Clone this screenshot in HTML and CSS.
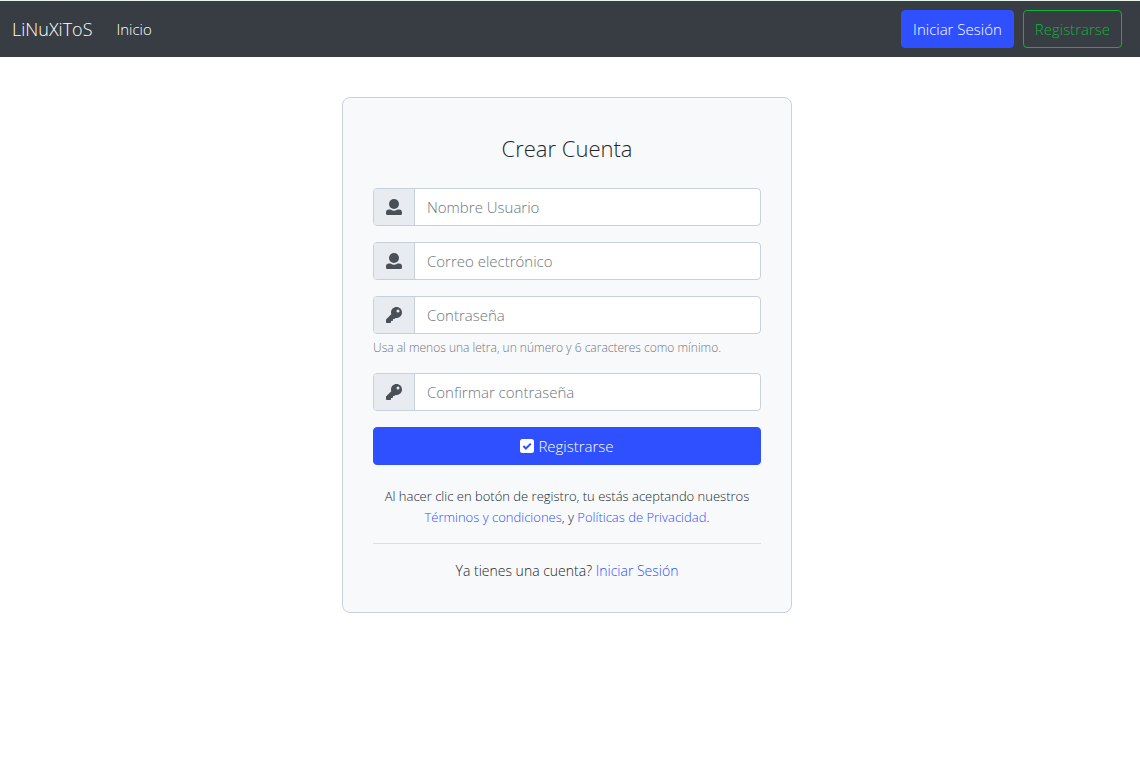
FILE: index.html
```html
<!DOCTYPE html>
<html lang="es">
<head>
	<meta charset="UTF-8">
	<meta name="viewport" content="width=device-width, initial-scale=1">
	<title>LiNuXiToS - Crear Cuenta</title>
	<link rel="stylesheet" href="styles.css">
</head>
<body>
	<svg class="sprite" aria-hidden="true">
		<symbol id="user" viewBox="0 0 16 16">
			<circle cx="8" cy="5" r="5"/>
			<path d="M3 10.500h1.500a6 6 0 0 0 7 0H13a3 3 0 0 1 3 3v1a1.500 1.500 0 0 1-1.500 1.500h-13A1.500 1.500 0 0 1 0 14.500v-1a3 3 0 0 1 3-3z"/>
		</symbol>
		<symbol id="key" viewBox="0 0 512 512">
			<path d="M512 176c0 97-79 176-176 176-11 0-22-1-33-3l-24 27a24 24 0 0 1-18 8h-37v40c0 13-11 24-24 24h-40v40c0 13-11 24-24 24H24c-13 0-24-11-24-24v-78c0-6 3-13 7-17l162-162A176 176 0 0 1 160 176C160 79 239 0 336 0s176 79 176 176zM336 128a48 48 0 1 0 96 0 48 48 0 0 0-96 0z"/>
		</symbol>
		<symbol id="check" viewBox="0 0 14 14">
			<path d="M2.500 0h9A2.500 2.500 0 0 1 14 2.500v9a2.500 2.500 0 0 1-2.500 2.500h-9A2.500 2.500 0 0 1 0 11.500v-9A2.500 2.500 0 0 1 2.500 0z"/>
			<path class="tick" d="M3.400 7l2.500 2.500 4.900-4.900"/>
		</symbol>
	</svg>

	<nav class="navbar">
		<a class="brand" href="#">LiNuXiToS</a>
		<a class="nav-link" href="#">Inicio</a>
		<div class="nav-buttons">
			<button type="button" class="btn btn-primary">Iniciar Sesión</button>
			<button type="button" class="btn btn-outline">Registrarse</button>
		</div>
	</nav>

	<main>
		<form class="card">
			<h1>Crear Cuenta</h1>
			<div class="input-group">
				<label for="usuario"><svg class="icon"><use href="#user"/></svg></label>
				<input type="text" id="usuario" placeholder="Nombre Usuario" aria-label="Nombre Usuario">
			</div>
			<div class="input-group">
				<label for="correo"><svg class="icon"><use href="#user"/></svg></label>
				<input type="email" id="correo" placeholder="Correo electrónico" aria-label="Correo electrónico">
			</div>
			<div class="field">
				<div class="input-group">
					<label for="clave"><svg class="icon"><use href="#key"/></svg></label>
					<input type="password" id="clave" placeholder="Contraseña" aria-label="Contraseña" aria-describedby="ayuda">
				</div>
				<small id="ayuda" class="help">Usa al menos una letra, un número y 6 caracteres como mínimo.</small>
			</div>
			<div class="input-group">
				<label for="clave2"><svg class="icon"><use href="#key"/></svg></label>
				<input type="password" id="clave2" placeholder="Confirmar contraseña" aria-label="Confirmar contraseña">
			</div>
			<button type="submit" class="btn btn-primary btn-block"><svg class="icon-check"><use href="#check"/></svg>Registrarse</button>
			<p class="terms">Al hacer clic en botón de registro, tu estás aceptando nuestros <a href="#">Términos y condiciones</a>, y <a href="#">Políticas de Privacidad</a>.</p>
			<hr>
			<p class="login">Ya tienes una cuenta? <a href="#">Iniciar Sesión</a></p>
		</form>
	</main>
</body>
</html>
```
FILE: styles.css
```css
*{
	box-sizing: border-box;
}
body{
	margin: 0;
	background: #fff;
	color: #23272b;
	font-family: "Open Sans", "Noto Sans", sans-serif;
	font-size: 15px;
	font-weight: 300;
	line-height: 24px;
}
a{
	color: #2f50ff;
	text-decoration: none;
}
.sprite{
	display: none;
}

/* barra superior */
.navbar{
	display: flex;
	align-items: center;
	padding: 9px 18px 9px 12px;
	border-top: 1px solid #e8f3ee;
	background: #383c43;
}
.brand{
	margin-right: 24px;
	color: #fff;
	font-size: 18px;
}
.nav-link{
	color: #fff;
}
.nav-buttons{
	display: flex;
	gap: 9px;
	margin-left: auto;
}

.btn{
	height: 38px;
	padding: 0 11px;
	border: 1px solid transparent;
	border-radius: 4px;
	font: inherit;
	cursor: pointer;
}
.btn-primary{
	background: #2f50ff;
	border-color: #2f50ff;
	color: #fff;
}
.btn-outline{
	background: transparent;
	border-color: #0cb43c;
	color: #0cb43c;
}
.btn-block{
	display: flex;
	align-items: center;
	justify-content: center;
	gap: 4px;
	width: 100%;
}

/* formulario */
main{
	padding: 40px 6px 40px 0;
}
.card{
	display: flex;
	flex-direction: column;
	gap: 16px;
	max-width: 450px;
	margin: 0 auto;
	padding: 30px;
	border: 1px solid #c8d0da;
	border-radius: 8px;
	background: #f8f9fb;
}
h1{
	margin: 4px 0 8px;
	font-size: 22px;
	font-weight: 300;
	line-height: 32px;
	text-align: center;
}
.input-group{
	display: flex;
	height: 38px;
	border: 1px solid #c8d0da;
	border-radius: 4px;
	background: #fff;
	overflow: hidden;
}
.input-group label{
	display: flex;
	align-items: center;
	padding: 0 12px;
	border-right: 1px solid #c8d0da;
	background: #e8ebef;
}
.input-group input{
	flex: 1;
	min-width: 0;
	padding: 0 12px;
	border: 0;
	background: transparent;
	color: #495057;
	font: inherit;
	outline: none;
}
.input-group input::placeholder{
	color: #6c757d;
	opacity: 1;
}
.icon{
	width: 16px;
	height: 16px;
	fill: #495057;
}
.icon-check{
	width: 14px;
	height: 14px;
	fill: #fff;
}
.tick{
	fill: none;
	stroke: #2f50ff;
	stroke-width: 2;
}
.help{
	display: block;
	padding-top: 5px;
	color: #6c757d;
	font-size: 12px;
	line-height: 18px;
}
.terms,
.login{
	margin: 0;
	text-align: center;
}
.terms{
	padding-top: 5px;
	margin-bottom: -1px;
	font-size: 13px;
	line-height: 21px;
}
hr{
	width: 100%;
	margin: 0;
	border: 0;
	border-top: 1px solid #dcdfe3;
}
.login{
	font-size: 14px;
	line-height: 22px;
}
```
